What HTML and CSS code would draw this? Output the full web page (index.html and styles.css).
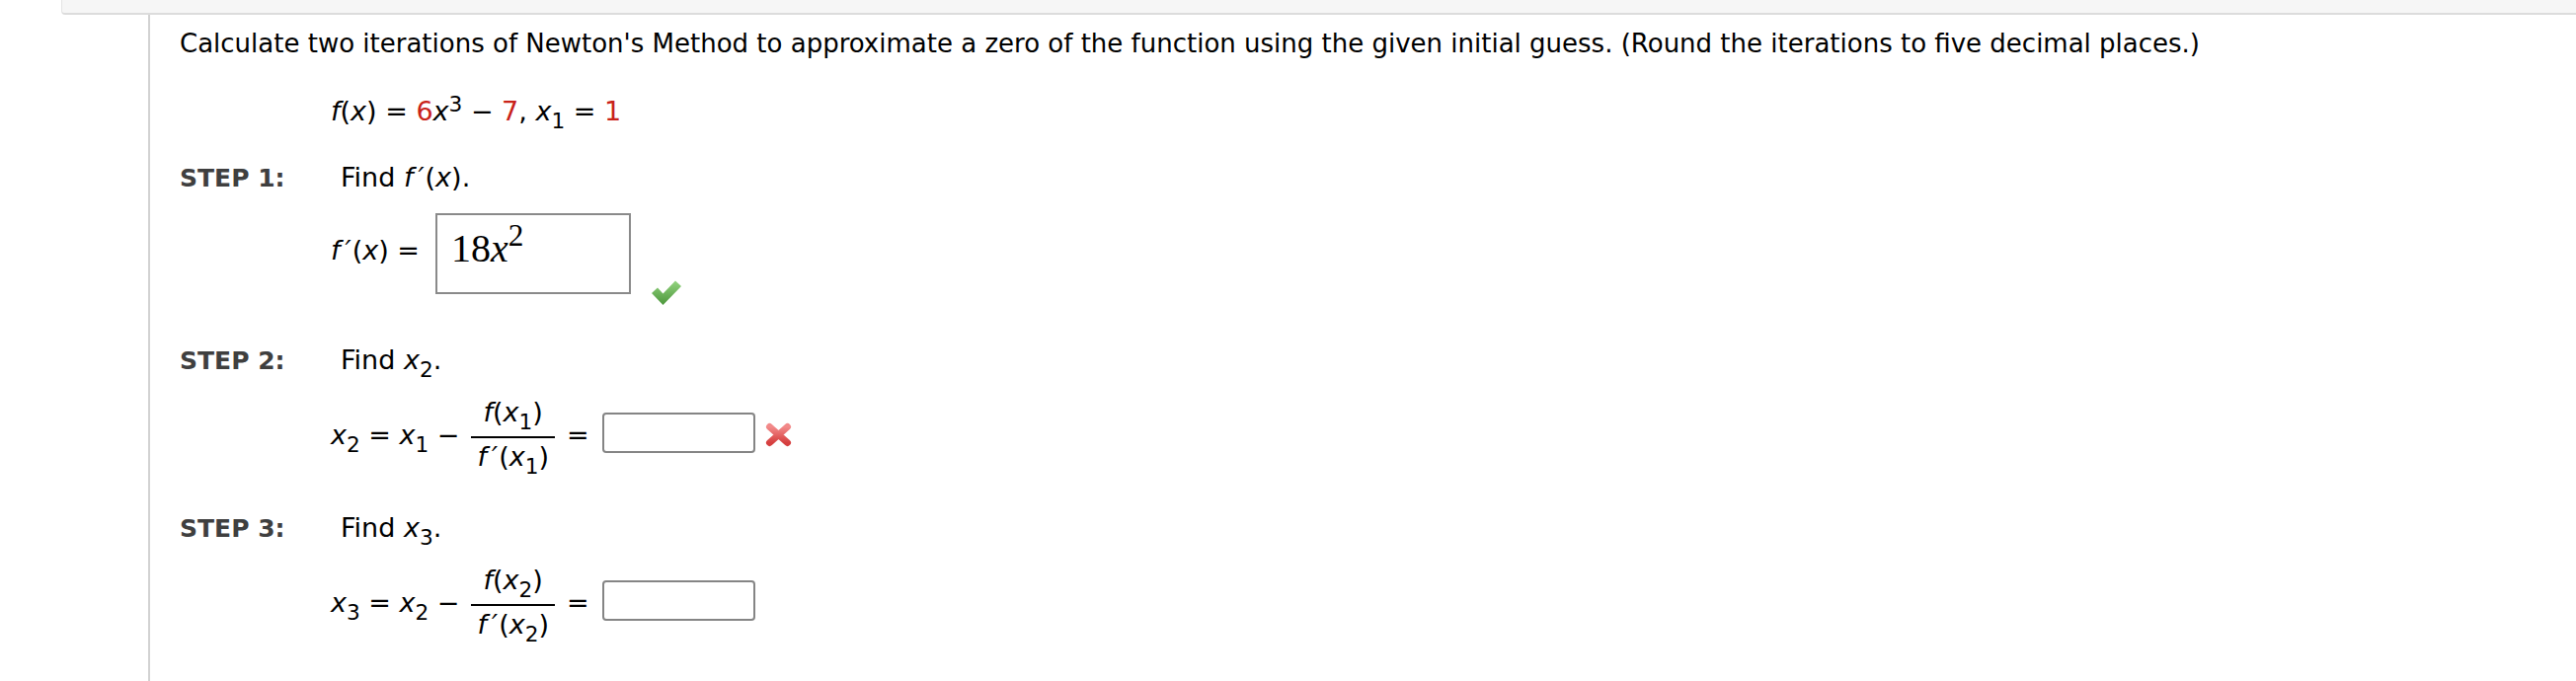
FILE: index.html
```html
<!DOCTYPE html>
<html>
<head>
<meta charset="utf-8">
<link rel="stylesheet" href="styles.css">
</head>
<body>
<div class="topbar"></div>
<div class="main">
  <p class="title">Calculate two iterations of Newton's Method to approximate a zero of the function using the given initial guess. (Round the iterations to five decimal places.)</p>
  <div class="eq given"><i>f</i>(<i>x</i>) = <span class="red">6</span><i>x</i><sup>3</sup> − <span class="red">7</span>, <i>x</i><sub>1</sub> = <span class="red">1</span></div>

  <div class="step s1"><span class="label">STEP 1:</span><span class="task">Find <i>f</i><i class="pr">′</i>(<i>x</i>).</span></div>
  <div class="eq deriv">
    <span class="lhs"><i>f</i><i class="pr">′</i>(<i>x</i>) =</span>
    <div class="bigbox"><span class="serif">18<i>x</i><sup>2</sup></span></div>
    <svg class="check" viewBox="0 0 30 25" width="30" height="25">
      <defs><linearGradient id="g" x1="0" y1="0" x2="0" y2="1"><stop offset="0" stop-color="#93d47f"/><stop offset="1" stop-color="#4c963b"/></linearGradient></defs>
      <path d="M0 13 L6 7.5 L11.5 13.5 L24 0.5 L30 6 L11.5 25 Z" fill="url(#g)"/>
    </svg>
  </div>

  <div class="step s2"><span class="label">STEP 2:</span><span class="task">Find <i>x</i><sub>2</sub>.</span></div>
  <div class="eq frow">
    <span class="lhs"><i>x</i><sub>2</sub> = <i>x</i><sub>1</sub> −</span>
    <span class="frac"><span class="num"><i>f</i>(<i>x</i><sub>1</sub>)</span><span class="den"><i>f</i><i class="pr">′</i>(<i>x</i><sub>1</sub>)</span></span>
    <span class="eqs">=</span>
    <span class="inbox"></span>
    <svg class="cross" viewBox="0 0 27 25" width="27" height="25">
      <defs><linearGradient id="r" x1="0" y1="0" x2="0" y2="1"><stop offset="0" stop-color="#f28a8a"/><stop offset="1" stop-color="#d63f3f"/></linearGradient></defs>
      <path d="M4.5 4.5 L22.5 20.5 M22.5 4.5 L4.5 20.5" stroke="url(#r)" stroke-width="7" stroke-linecap="round" fill="none"/>
    </svg>
  </div>

  <div class="step s3"><span class="label">STEP 3:</span><span class="task">Find <i>x</i><sub>3</sub>.</span></div>
  <div class="eq frow">
    <span class="lhs"><i>x</i><sub>3</sub> = <i>x</i><sub>2</sub> −</span>
    <span class="frac"><span class="num"><i>f</i>(<i>x</i><sub>2</sub>)</span><span class="den"><i>f</i><i class="pr">′</i>(<i>x</i><sub>2</sub>)</span></span>
    <span class="eqs">=</span>
    <span class="inbox"></span>
  </div>
</div>
</body>
</html>
```
FILE: styles.css
```css
html, body { margin: 0; padding: 0; background: #fff; }
body { font-family: "DejaVu Sans", Verdana, sans-serif; color: #000; }

.topbar {
  margin-left: 62px;
  height: 13px;
  background: #f6f6f6;
  border-left: 1px solid #e4e4e4;
  border-bottom: 2px solid #dcdcdc;
  border-bottom-left-radius: 4px;
}

.main {
  margin-left: 150px;
  border-left: 2px solid #d2d2d2;
  padding: 13px 0 0 30px;
  min-height: 675px;
  box-sizing: border-box;
  font-size: 27px;
  line-height: 32px;
}

.title { margin: 0; font-size: 26px; line-height: 32px; }

.red { color: #c9221a; }
i { font-style: italic; }
.pr { margin-left: 5px; margin-right: 1px; }
sup, sub { font-size: 0.8em; line-height: 0; position: relative; vertical-align: baseline; }
sup { top: -0.42em; }
sub { top: 0.38em; }

.eq { padding-left: 153px; }
.given { margin-top: 37px; }

.step { display: flex; align-items: baseline; }
.label { width: 163px; flex: none; font-weight: bold; color: #3f3f3f; font-size: 25px; }
.s1 { margin-top: 35px; }
.s2 { margin-top: 51px; }
.s3 { margin-top: 42px; }

.deriv { display: flex; align-items: flex-start; margin-top: 19px; }
.deriv .lhs { margin-top: 22px; margin-right: 16px; }
.bigbox {
  width: 198px; height: 82px; box-sizing: border-box;
  border: 2px solid #8a8a8a;
  padding: 12px 0 0 14px;
}
.serif { font-family: "Liberation Serif", "Times New Roman", serif; font-size: 40px; line-height: 44px; }
.serif sup { font-size: 0.78em; top: -0.5em; }
.check { align-self: flex-end; margin: 0 0 -11px 21px; }

.frow { display: flex; align-items: center; margin-top: 22px; }
.frac { display: flex; flex-direction: column; align-items: center; margin-left: 12px; }
.num { line-height: 28px; padding: 0 6px 10px; }
.den { line-height: 28px; padding: 5px 6px 0; border-top: 2px solid #000; }
.eqs { margin-left: 12px; }
.inbox {
  width: 155px; height: 41px; box-sizing: border-box;
  margin-left: 13px; margin-bottom: 4px;
  border: 2px solid #858585; border-radius: 4px; background: #fff;
}
.cross { margin-left: 10px; }
```
